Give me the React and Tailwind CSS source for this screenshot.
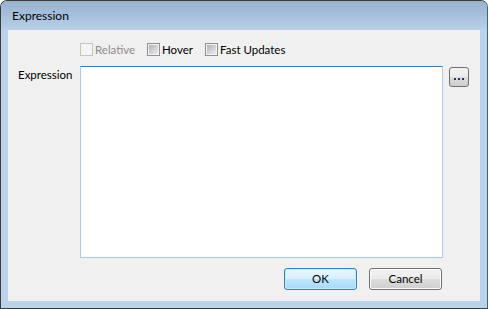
import React from "react";

function Check({ label, disabled, className = "" }) {
  return (
    <div className={"flex items-center " + className}>
      <div
        className={
          "w-[13px] h-[13px] border flex items-center justify-center " +
          (disabled ? "border-[#c4c4c4] bg-[#f4f4f4]" : "border-[#8e8f8f] bg-[#f4f4f4]")
        }
      >
        {!disabled && (
          <div className="w-[9px] h-[9px] bg-gradient-to-br from-[#b0b4ba] to-[#ececec]" />
        )}
      </div>
      <span className={"ml-[2px] leading-[16px] " + (disabled ? "text-[#8d8d8d]" : "text-black")}>
        {label}
      </span>
    </div>
  );
}

export default function App() {
  return (
    <div
      className="w-[488px] h-[309px] overflow-hidden rounded-t-[7px] border border-[#3a3a3a] border-r-[#2f6f7a] flex flex-col bg-[#bad2ea] text-[11.5px] text-black"
      style={{ fontFamily: 'Lato, "Liberation Sans", sans-serif' }}
    >
      <div className="h-[29px] shrink-0 bg-gradient-to-b from-[#97b1cf] to-[#b9d0ea] pl-[11px] pt-[7px] leading-[16px] text-[12px]">
        Expression
      </div>
      <div className="mx-[7px] h-[271px] shrink-0 bg-[#f0f0f0] flex flex-col pt-[13px]">
        <div className="flex items-center pl-[72px] h-[13px]">
          <Check label="Relative" disabled className="w-[67px]" />
          <Check label="Hover" className="w-[58px]" />
          <Check label="Fast Updates" />
        </div>
        <div className="flex mt-[10px]">
          <div className="w-[72px] pl-[10px] pt-[1px] leading-[16px]">Expression</div>
          <div className="w-[363px] h-[192px] bg-white border border-[#a9c9e6] border-t-[#3d7bad]" />
          <div className="ml-[6px] mt-[1px] w-[20px] h-[20px] rounded-[3px] border border-[#707070] bg-[linear-gradient(#f2f2f2_0%,#ebebeb_50%,#dddddd_50%,#cfcfcf_100%)] flex items-center justify-center gap-[2px] pt-[3px]">
            <span className="w-[2px] h-[2px] bg-[#2a2a7a]" />
            <span className="w-[2px] h-[2px] bg-[#2a2a7a]" />
            <span className="w-[2px] h-[2px] bg-[#2a2a7a]" />
          </div>
        </div>
        <div className="flex mt-[10px] pl-[276px] gap-[12px]">
          <div className="w-[73px] h-[22px] rounded-[3px] border border-[#3c7fb1] bg-[linear-gradient(#eaf6fd_0%,#d9f0fc_50%,#bee6fd_50%,#a7d9f5_100%)] flex items-center justify-center leading-[16px] shadow-[inset_0_0_0_1px_#c2e8fc]">
            OK
          </div>
          <div className="w-[73px] h-[22px] rounded-[3px] border border-[#707070] bg-[linear-gradient(#f2f2f2_0%,#ebebeb_50%,#dddddd_50%,#cfcfcf_100%)] flex items-center justify-center leading-[16px] shadow-[inset_0_0_0_1px_#fcfcfc]">
            Cancel
          </div>
        </div>
      </div>
    </div>
  );
}
